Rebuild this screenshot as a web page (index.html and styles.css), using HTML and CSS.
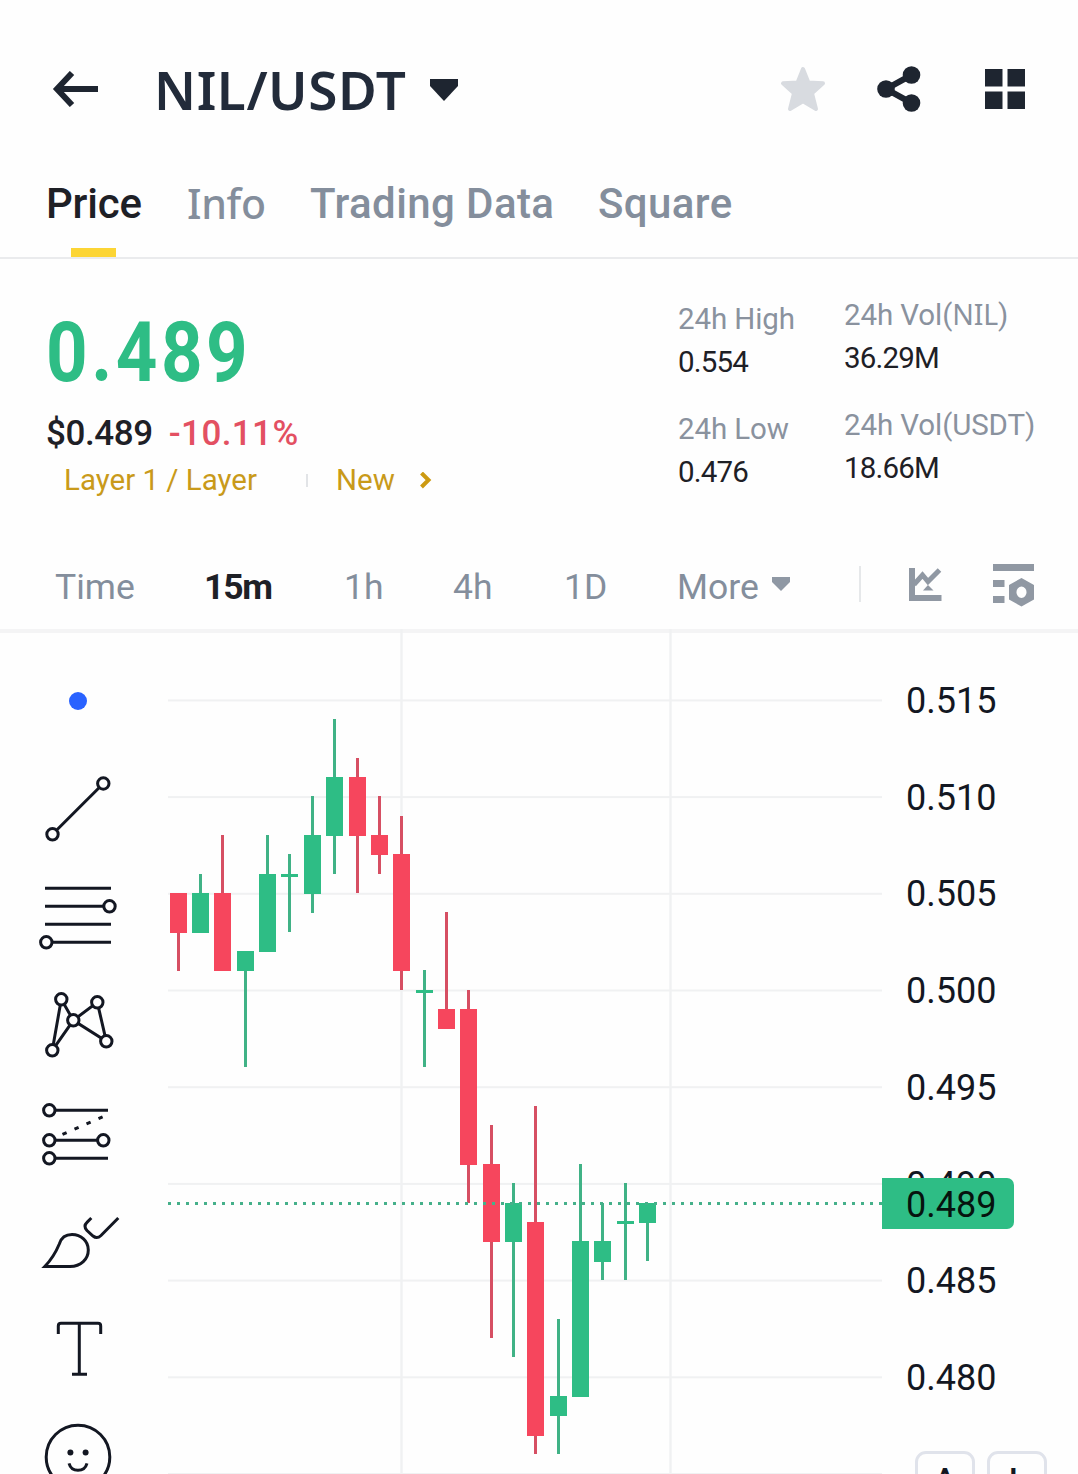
FILE: index.html
```html
<!DOCTYPE html>
<html lang="en">
<head>
    <meta charset="UTF-8">
    <meta name="viewport" content="width=device-width, initial-scale=1.0">
    <title>NIL/USDT</title>
    <link rel="stylesheet" href="styles.css">
</head>
<body>
<header class="header">
    <svg class="back" width="46" height="36" viewBox="0 0 46 36">
        <path d="M20 2 L5 18 L20 34 M5 18 H46" fill="none" stroke="#1e2530" stroke-width="6"/>
    </svg>
    <h1 class="pair">NIL/USDT</h1>
    <svg class="pair-caret" width="28" height="22" viewBox="0 0 28 22">
        <path d="M0 0 H28 V7 L14 22 L0 7 Z" fill="#1e2530"/>
    </svg>
    <div class="header-icons">
        <svg width="46" height="46" viewBox="0 0 46 46">
            <path d="M23 3 L28.4 16.5 L43 17.3 L32 27.2 L36 43 L23 35.3 L10 43 L14 27.2 L3 17.3 L17.6 16.5 Z" fill="#d8dbe0" stroke="#d8dbe0" stroke-width="4" stroke-linejoin="round"/>
        </svg>
        <svg width="44" height="46" viewBox="0 0 44 46">
            <path d="M34.5 9 L9 23 L34.5 37" fill="none" stroke="#1e2530" stroke-width="6"/>
            <circle cx="9" cy="23" r="8.8" fill="#1e2530"/>
            <circle cx="34.5" cy="9" r="8.8" fill="#1e2530"/>
            <circle cx="34.5" cy="37" r="8.8" fill="#1e2530"/>
        </svg>
        <svg width="40" height="40" viewBox="0 0 40 40" fill="#1e2530">
            <rect width="17.5" height="17.5"/>
            <rect x="22.5" width="17.5" height="17.5"/>
            <rect y="22.5" width="17.5" height="17.5"/>
            <rect x="22.5" y="22.5" width="17.5" height="17.5"/>
        </svg>
    </div>
</header>

<nav class="tabs">
    <a class="tab active">Price</a>
    <a class="tab info">Info</a>
    <a class="tab">Trading Data</a>
    <a class="tab">Square</a>
</nav>

<section class="summary">
    <div class="price-box">
        <div class="last-price">0.489</div>
        <div class="fiat"><span class="usd">$0.489</span><span class="change">-10.11%</span></div>
        <div class="tags">
            <span class="layer">Layer 1 / Layer</span>
            <i class="tag-sep"></i>
            <span class="new">New</span>
            <svg width="14" height="18" viewBox="0 0 14 18">
                <path d="M2.5 1 L9.5 8 L2.5 15" fill="none" stroke="#cc9a12" stroke-width="4"/>
            </svg>
        </div>
    </div>
    <dl class="stats high-low">
        <dt>24h High</dt>
        <dd>0.554</dd>
        <dt>24h Low</dt>
        <dd>0.476</dd>
    </dl>
    <dl class="stats volume">
        <dt>24h Vol(<span class="nil">NIL</span>)</dt>
        <dd>36.29M</dd>
        <dt>24h Vol(USDT)</dt>
        <dd>18.66M</dd>
    </dl>
</section>

<nav class="intervals">
    <span>Time</span>
    <span class="selected">15m</span>
    <span>1h</span>
    <span>4h</span>
    <span>1D</span>
    <span>More</span>
    <svg width="18" height="14" viewBox="0 0 18 14">
        <path d="M0 0 H18 V5 L9 14 L0 5 Z" fill="#8f98a4"/>
    </svg>
    <i class="interval-sep"></i>
    <svg width="33" height="33" viewBox="0 0 33 33">
        <path d="M0 0 H6 V27 H32.5 V33 H0 Z" fill="#9098a3"/>
        <path d="M5 16.5 L13.5 7 L19 13.5 L30.5 2" fill="none" stroke="#9098a3" stroke-width="5"/>
        <path d="M14 22.5 L19 17 L24.5 22.5 Z" fill="#9098a3"/>
    </svg>
    <svg width="42" height="44" viewBox="0 0 42 44" fill="#9098a3">
        <rect width="41" height="7"/>
        <rect y="16" width="11.5" height="7"/>
        <rect y="32" width="11.5" height="7"/>
        <path fill-rule="evenodd" d="M28.5 14 L41 21 V35.5 L28.5 42.5 L16 35.5 V21 Z M28.5 22.5 A5 5.7 0 1 0 28.5 34 A5 5.7 0 1 0 28.5 22.5 Z"/>
    </svg>
</nav>

<main class="chart">
    <aside class="tools">
        <svg viewBox="0 0 168 108">
            <circle class="dot" cx="78" cy="54" r="9"/>
        </svg>
        <svg viewBox="0 0 168 108">
            <path d="M52.5 79.3 L103.3 28.5"/>
            <circle cx="103.3" cy="28.5" r="5.7"/>
            <circle cx="52.5" cy="79.3" r="5.7"/>
        </svg>
        <svg viewBox="0 0 168 108">
            <path d="M45 25.3 H111 M45 43.3 H111 M45 61.3 H111 M45 79.3 H111"/>
            <circle cx="109.5" cy="43.3" r="5.7"/>
            <circle cx="46.3" cy="79.3" r="5.7"/>
        </svg>
        <svg viewBox="0 0 168 108">
            <path d="M52.3 79.3 L61.3 28.3 L73.3 49.3 Z M73.3 49.3 L97.3 31.3 L106.3 70.3 Z"/>
            <circle cx="61.3" cy="28.3" r="5.7"/>
            <circle cx="97.3" cy="31.3" r="5.7"/>
            <circle cx="73.3" cy="49.3" r="5.7"/>
            <circle cx="52.3" cy="79.3" r="5.7"/>
            <circle cx="106.3" cy="70.3" r="5.7"/>
        </svg>
        <svg viewBox="0 0 168 108">
            <path d="M49.3 31.3 H108 M49.3 61.3 H103 M49.3 79.3 H108"/>
            <path d="M62.5 55.4 L104 37.2" stroke-dasharray="4.5 8.6"/>
            <circle cx="49.3" cy="31.3" r="5.7"/>
            <circle cx="49.3" cy="61.3" r="5.7"/>
            <circle cx="103.3" cy="61.3" r="5.7"/>
            <circle cx="49.3" cy="79.3" r="5.7"/>
        </svg>
        <svg viewBox="0 0 168 108">
            <path d="M44.8 79.5 C51 73 56 65 59.3 57 C61.5 50 66 47.6 72 47.6 C81 47.6 88.3 54 88.3 63 C88.3 72 81 79.5 70 79.5 Z"/>
            <path d="M91.3 31 L87 35.3 Q83 39 87 43.5 L93 49 Q97 52.3 101 48.5 L118.3 31"/>
        </svg>
        <svg viewBox="0 0 168 108">
            <path d="M58.3 39 V31 Q58.3 28.3 61 28.3 H98 Q100.7 28.3 100.7 31 V39 M79.3 28.3 V79.3 M72 79.3 H87"/>
        </svg>
        <svg viewBox="0 0 168 108">
            <circle cx="78" cy="54" r="31.8"/>
            <circle class="eye" cx="70.4" cy="49.5" r="3"/>
            <circle class="eye" cx="85.6" cy="49.5" r="3"/>
            <path d="M69 60.3 Q71 67.3 78 67.3 Q85 67.3 87 60.3"/>
        </svg>
    </aside>
    <svg class="plot" id="plot" width="714" height="845" viewBox="168 629 714 845"></svg>
    <div class="axis">
        <div>0.515</div>
        <div>0.510</div>
        <div>0.505</div>
        <div>0.500</div>
        <div>0.495</div>
        <div>0.490</div>
        <div>0.485</div>
        <div>0.480</div>
        <span class="price-tag">0.489</span>
        <div class="scale-buttons">
            <button>A</button>
            <button>L</button>
        </div>
    </div>
</main>

<script>
    // [center x, open, close, high, low], prices in thousandths
    const candles = [
        [178.5, 505, 503, 505, 501],
        [200.5, 503, 505, 506, 503],
        [222.5, 505, 501, 508, 501],
        [245.5, 501, 502, 502, 496],
        [267.5, 502, 506, 508, 502],
        [289.5, 506, 506, 507, 503],
        [312.5, 505, 508, 510, 504],
        [334.5, 508, 511, 514, 506],
        [357.5, 511, 508, 512, 505],
        [379.5, 508, 507, 510, 506],
        [401.5, 507, 501, 509, 500],
        [424.5, 500, 500, 501, 496],
        [446.5, 499, 498, 504, 498],
        [468.5, 499, 491, 500, 489],
        [491.5, 491, 487, 493, 482],
        [513.5, 487, 489, 490, 481],
        [535.5, 488, 477, 494, 476],
        [558.5, 478, 479, 483, 476],
        [580.5, 479, 487, 491, 479],
        [602.5, 486, 487, 489, 485],
        [625.5, 488, 488, 490, 485],
        [647.5, 488, 489, 489, 486]
    ];

    const plot = document.getElementById("plot");

    function priceToY(price) {
        return 700.4 + (515 - price) * 19.34;
    }

    function addRect(x, y, width, height, className) {
        const rect = document.createElementNS("http://www.w3.org/2000/svg", "rect");
        rect.setAttribute("x", x);
        rect.setAttribute("y", y);
        rect.setAttribute("width", width);
        rect.setAttribute("height", height);
        rect.setAttribute("class", className);
        plot.appendChild(rect);
    }

    for (let price = 515; price >= 475; price -= 5) {
        addRect(168, priceToY(price) - 1, 714, 2, "grid");
    }
    addRect(400.3, 629, 2.4, 845, "grid");
    addRect(669.3, 629, 2.4, 845, "grid");

    candles.forEach(([x, open, close, high, low]) => {
        const color = close >= open ? "up" : "down";
        const doji = open === close ? 1 : 0;
        const top = Math.round(priceToY(Math.max(open, close)) - 0.7) - (open === 488 ? doji : 0);
        const bottom = Math.round(priceToY(Math.min(open, close)) + 0.3);
        const wickTop = Math.round(priceToY(high) - 0.7);
        addRect(x - 1.5, wickTop, 3, Math.round(priceToY(low) - 0.6) - wickTop, "wick-" + color);
        addRect(x - 8.5, top, 17, Math.max(3, bottom - top), color);
    });

    // last price line
    for (let x = 168; x < 882; x += 9) {
        addRect(x, 1202, 3, 3, "last");
    }
</script>
</body>
</html>
```
FILE: styles.css
```css
* {
    box-sizing: border-box;
}

body {
    margin: 0;
    width: 1078px;
    height: 1474px;
    overflow: hidden;
    background: #fefefe;
    font-family: Roboto, sans-serif;
    color: #1e2026;
}

svg {
    display: block;
    flex: none;
}

.header {
    display: flex;
    align-items: center;
    height: 120px;
    margin-top: 29px;
    padding: 0 53px 0 52px;
}

.pair {
    width: 276px;
    margin: 0 0 0 54px;
    padding: 2px 0 0 2px;
    font-family: "Noto Sans", sans-serif;
    font-size: 53px;
    font-weight: 600;
    line-height: 120px;
    letter-spacing: 0.6px;
    color: #222b3a;
    white-space: nowrap;
}

.pair-caret {
    margin: 2px 0 0 2px;
}

.header-icons {
    display: flex;
    align-items: center;
    margin-left: auto;
}

.header-icons svg:nth-child(2) {
    margin: 0 64px 0 51px;
}

.tabs {
    display: grid;
    grid-template-columns: 140px 123px 288px auto;
    height: 110px;
    padding-left: 47px;
    border-bottom: 2px solid #eaebed;
}

.tab {
    font-size: 42px;
    font-weight: 500;
    line-height: 109px;
    letter-spacing: 0.4px;
    color: #848e9c;
    white-space: nowrap;
}

.tab.active {
    position: relative;
    margin-left: -1px;
    letter-spacing: -0.2px;
    color: #1e2026;
}

.tab.active::after {
    content: "";
    position: absolute;
    left: 25px;
    bottom: 1px;
    width: 45px;
    height: 9px;
    background: #fcd535;
}

.tab.info {
    font-family: "Noto Sans", sans-serif;
    font-size: 41px;
    letter-spacing: -0.3px;
}

.summary {
    display: flex;
    height: 286px;
}

.price-box {
    width: 678px;
    padding: 44px 0 0 46px;
}

.last-price {
    width: 240px;
    font-size: 82.5px;
    font-weight: 700;
    line-height: 100px;
    letter-spacing: 4px;
    color: #2ebd85;
    transform: scaleX(0.88);
    transform-origin: left;
}

.fiat {
    font-size: 35px;
    font-weight: 500;
    line-height: 62px;
    letter-spacing: -0.4px;
}

.change {
    margin-left: 16px;
    letter-spacing: 0.4px;
    color: #e35062;
}

.tags {
    display: flex;
    align-items: center;
    margin-top: -1px;
    padding-left: 18px;
    font-size: 29.5px;
    line-height: 33px;
    color: #c99a1a;
}

.layer {
    width: 242px;
}

.tag-sep {
    width: 2px;
    height: 13px;
    background: #e2e4e7;
}

.new {
    width: 111px;
    padding-left: 28px;
}

.stats {
    margin: 0;
    padding-top: 39px;
    font-size: 29.5px;
    line-height: 43px;
    white-space: nowrap;
}

.stats dt {
    letter-spacing: -0.1px;
    color: #8a929e;
}

.stats dd {
    margin: 0 0 24px;
    letter-spacing: -0.8px;
    color: #1e2026;
}

.high-low {
    width: 166px;
}

.volume {
    padding-top: 35px;
}

.nil {
    font-family: "Noto Sans", sans-serif;
    font-size: 28.5px;
    line-height: 1;
}

.intervals {
    display: grid;
    grid-template-columns: 149px 140px 109px 111px 113px 95px 87px 50px 84px auto;
    align-items: center;
    height: 88px;
    padding-left: 55px;
    border-bottom: 4px solid #f4f4f5;
    font-size: 35.5px;
    color: #848e9c;
}

.intervals svg,
.interval-sep {
    margin-bottom: 6px;
}

.intervals svg:nth-of-type(3) {
    margin-bottom: 2px;
}

.selected {
    font-weight: 700;
    letter-spacing: -1.2px;
    color: #1e2026;
}

.interval-sep {
    width: 2px;
    height: 36px;
    background: #e6e8ea;
}

.chart {
    display: flex;
    height: 841px;
}

.tools {
    width: 168px;
    padding-top: 14px;
}

.tools svg {
    width: 168px;
    height: 108px;
    fill: none;
    stroke: #131722;
    stroke-width: 3;
}

.tools circle {
    fill: #fefefe;
}

.tools .dot {
    fill: #2962ff;
    stroke: none;
}

.tools .eye {
    fill: #131722;
    stroke: none;
}

.plot {
    margin-top: -4px;
}

.grid {
    fill: #f0f1f2;
}

.up {
    fill: #2ebd85;
}

.down {
    fill: #f6465d;
}

.wick-up {
    fill: #40b286;
}

.wick-down {
    fill: #d64f63;
}

.last {
    fill: #45b08a;
}

.axis {
    position: relative;
    flex: 1;
    padding: 20px 0 0 24px;
    font-size: 36px;
    line-height: 96.7px;
    color: #131722;
}

.price-tag {
    position: absolute;
    left: 0;
    top: 545px;
    width: 132px;
    height: 51px;
    padding-left: 24px;
    border-radius: 0 7px 7px 0;
    background: #2ebd85;
    line-height: 54px;
    color: #06130e;
}

.scale-buttons {
    position: absolute;
    left: 33px;
    top: 818px;
    display: flex;
    gap: 12px;
}

.scale-buttons button {
    width: 60px;
    height: 60px;
    padding: 0 0 4px;
    border: 3px solid #e0e3eb;
    border-radius: 11px;
    background: #fefefe;
    font-family: Roboto, sans-serif;
    font-size: 28px;
    font-weight: 700;
    line-height: 1;
    color: #131722;
}
```
